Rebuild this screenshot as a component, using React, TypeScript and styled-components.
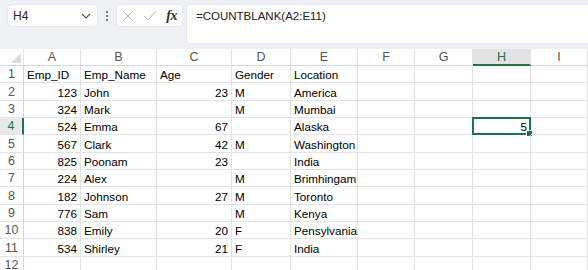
import styled, { createGlobalStyle, css } from 'styled-components';

const GlobalStyle = createGlobalStyle`
  html, body {
    margin: 0;
    padding: 0;
    background: #ffffff;
    overflow: hidden;
  }
`;

const GREEN = '#217346';
// row header + columns A..H, column I takes the rest
const COLS = [24, 57, 76, 75, 59, 67, 57, 58, 58];
const LETTERS = ['A', 'B', 'C', 'D', 'E', 'F', 'G', 'H', 'I'];

type Row = [string, string, string, string, string];

const rows: Row[] = [
  ['Emp_ID', 'Emp_Name', 'Age', 'Gender', 'Location'],
  ['123', 'John', '23', 'M', 'America'],
  ['324', 'Mark', '', 'M', 'Mumbai'],
  ['524', 'Emma', '67', '', 'Alaska'],
  ['567', 'Clark', '42', 'M', 'Washington'],
  ['825', 'Poonam', '23', '', 'India'],
  ['224', 'Alex', '', 'M', 'Brimhingam'],
  ['182', 'Johnson', '27', 'M', 'Toronto'],
  ['776', 'Sam', '', 'M', 'Kenya'],
  ['838', 'Emily', '20', 'F', 'Pensylvania'],
  ['534', 'Shirley', '21', 'F', 'India'],
  ['', '', '', '', ''],
];

const Page = styled.div`
  width: 588px;
  height: 270px;
  overflow: hidden;
  font-family: 'Liberation Sans', Arial, sans-serif;
`;

const Toolbar = styled.div`
  height: 49px;
  background: #eff1f4;
  display: flex;
  align-items: flex-start;
  padding: 5px 0 0 8px;
  box-sizing: border-box;
`;

const Field = styled.div<{ $w?: number; $h?: number }>`
  background: #ffffff;
  border-radius: 4px;
  box-shadow: 0 0 0 1px #e6e8eb;
  height: ${({ $h }) => $h ?? 21}px;
  ${({ $w }) =>
    $w
      ? css`
          width: ${$w}px;
        `
      : css`
          flex: 1;
        `}
  display: flex;
  align-items: center;
  box-sizing: border-box;
`;

const NameBox = styled(Field)`
  padding: 0 6px 0 5px;
  justify-content: space-between;
  font-size: 12px;
  color: #222;
`;

const Dots = styled.div`
  width: 20px;
  height: 21px;
  display: flex;
  flex-direction: column;
  align-items: center;
  justify-content: center;
  gap: 2px;
  span {
    width: 2px;
    height: 2px;
    border-radius: 1px;
    background: #555;
  }
`;

const FxBox = styled(Field)`
  padding: 0 5px 0 5px;
  justify-content: space-between;
  margin-right: 5px;
`;

const Fx = styled.span`
  font-family: 'Liberation Serif', 'Times New Roman', serif;
  font-style: italic;
  font-size: 14px;
  color: #333;
  font-weight: bold;
  letter-spacing: -0.5px;
`;

const FormulaBox = styled(Field)`
  flex: 1;
  border-radius: 4px 0 0 4px;
  align-items: flex-start;
  padding: 5px 0 0 9px;
  font-size: 11.5px;
  color: #222;
`;

const Sheet = styled.div`
  display: grid;
  grid-template-columns: ${COLS.map((c) => `${c}px`).join(' ')} 1fr;
  grid-template-rows: 17px;
  grid-auto-rows: 17.33px;
  font-size: 11.7px;
  color: #000;
`;

const HeadCell = styled.div<{ $active?: boolean }>`
  box-sizing: border-box;
  display: flex;
  align-items: center;
  justify-content: center;
  font-size: 12.5px;
  color: #555;
  background: #ffffff;
  border-right: 1px solid #e3e3e3;
  border-bottom: 1px solid #d6d6d6;
  ${({ $active }) =>
    $active &&
    css`
      background: #e3e3e3;
      color: ${GREEN};
      border-bottom: 2px solid ${GREEN};
    `}
`;

const Corner = styled(HeadCell)`
  position: relative;
  &::after {
    content: '';
    position: absolute;
    right: 2px;
    bottom: 2px;
    border-left: 10px solid transparent;
    border-bottom: 10px solid #dcdcdc;
  }
`;

const RowHead = styled.div<{ $active?: boolean }>`
  box-sizing: border-box;
  display: flex;
  align-items: flex-end;
  justify-content: center;
  padding-bottom: 1px;
  font-size: 12.5px;
  color: #555;
  border-bottom: 1px solid #e3e3e3;
  border-right: 1px solid #d6d6d6;
  ${({ $active }) =>
    $active &&
    css`
      background: #e9e9e9;
      color: ${GREEN};
      border-right: 2px solid ${GREEN};
    `}
`;

const Cell = styled.div<{ $num?: boolean }>`
  box-sizing: border-box;
  border-right: 1px solid #e3e3e3;
  border-bottom: 1px solid #e3e3e3;
  padding: 0 3px 1px;
  display: flex;
  align-items: flex-end;
  justify-content: ${({ $num }) => ($num ? 'flex-end' : 'flex-start')};
  white-space: nowrap;
  position: relative;
`;

const Selection = styled.div`
  position: absolute;
  left: -1px;
  top: -1px;
  right: -1px;
  bottom: -1px;
  border: 2px solid ${GREEN};
  pointer-events: none;
  &::after {
    content: '';
    position: absolute;
    right: -4px;
    bottom: -4px;
    width: 5px;
    height: 5px;
    background: ${GREEN};
    border: 1px solid #fff;
  }
`;

const isNum = (v: string) => v !== '' && !isNaN(Number(v));

const App = () => (
  <Page>
    <GlobalStyle />
    <Toolbar>
      <NameBox $w={89}>
        <span>H4</span>
        <svg width="10" height="6" viewBox="0 0 10 6">
          <path d="M1 1l4 4 4-4" fill="none" stroke="#555" strokeWidth="1.1" />
        </svg>
      </NameBox>
      <Dots>
        <span />
        <span />
        <span />
      </Dots>
      <FxBox $w={65}>
        <svg width="12" height="12" viewBox="0 0 12 12">
          <path d="M1 1l10 10M11 1L1 11" stroke="#b8b8b8" strokeWidth="1" />
        </svg>
        <svg width="14" height="12" viewBox="0 0 14 12">
          <path d="M1 6l4 4 8-9" fill="none" stroke="#b8b8b8" strokeWidth="1" />
        </svg>
        <Fx>fx</Fx>
      </FxBox>
      <FormulaBox $h={38}>=COUNTBLANK(A2:E11)</FormulaBox>
    </Toolbar>
    <Sheet>
      <Corner />
      {LETTERS.map((l) => (
        <HeadCell key={l} $active={l === 'H'}>
          {l}
        </HeadCell>
      ))}
      {rows.map((r, i) => {
        const n = i + 1;
        return [
          <RowHead key={`h${n}`} $active={n === 4}>
            {n}
          </RowHead>,
          ...r.map((v, j) => (
            <Cell key={`${n}-${j}`} $num={isNum(v)}>
              {v}
            </Cell>
          )),
          <Cell key={`${n}-F`} />,
          <Cell key={`${n}-G`} />,
          <Cell key={`${n}-H`} $num>
            {n === 4 ? '5' : ''}
            {n === 4 && <Selection />}
          </Cell>,
          <Cell key={`${n}-I`} />,
        ];
      })}
    </Sheet>
  </Page>
);

export default App;
